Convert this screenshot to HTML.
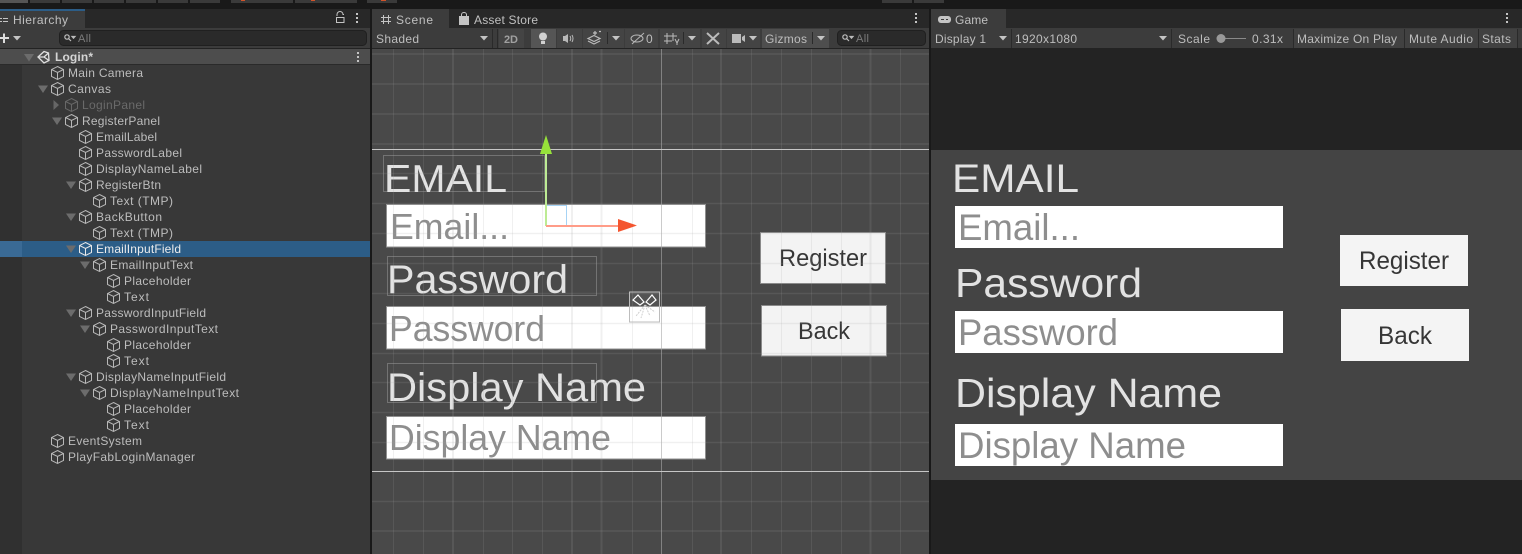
<!DOCTYPE html>
<html><head><meta charset="utf-8"><style>
html,body{margin:0;padding:0;background:#191919;width:1522px;height:554px;overflow:hidden}
svg{display:block}
text{font-family:"Liberation Sans",sans-serif}
.u{font-size:12px;fill:#bdbdbd}
.h{font-size:12px;fill:#c0c0c0}
.l{fill:#e2e2e2}
.p{fill:#8e8e8e}
.d{fill:#363636}
</style></head><body>
<svg width="1522" height="554" viewBox="0 0 1522 554" xmlns="http://www.w3.org/2000/svg">
<defs>
<g id="c" fill="none" stroke="#b8b8b8" stroke-width="1" transform="translate(.5 0)"><path d="M0 -6.500L6 -3.500V3.500L0 6.500L-6 3.500V-3.500Z"/><path d="M-6 -3.500L0 -.5L6 -3.500M0 -.5V6.500"/></g>
<g id="cd" fill="none" stroke="#686868" stroke-width="1" transform="translate(.5 0)"><path d="M0 -6.500L6 -3.500V3.500L0 6.500L-6 3.500V-3.500Z"/><path d="M-6 -3.500L0 -.5L6 -3.500M0 -.5V6.500"/></g>
<g id="cw" fill="none" stroke="#e8e8e8" stroke-width="1" transform="translate(.5 0)"><path d="M0 -6.500L6 -3.500V3.500L0 6.500L-6 3.500V-3.500Z"/><path d="M-6 -3.500L0 -.5L6 -3.500M0 -.5V6.500"/></g>
<path id="t" d="M-5 -3.500H5L0 4Z" fill="#6c6c6c"/>
<path id="dd" d="M-4 -2H4L0 2.500Z" fill="#c4c4c4"/>
<g id="dots" fill="#c4c4c4"><rect x="-1" y="-5" width="2" height="2"/><rect x="-1" y="-1" width="2" height="2"/><rect x="-1" y="3" width="2" height="2"/></g>
<g id="mag" fill="none" stroke="#bbb" stroke-width="1.200"><circle cx="0" cy="0" r="2.200"/><path d="M1.800 1.800L4 4M5 -.5H8L6.500 1.200Z"/></g>
</defs>

<!-- top toolbar remnants -->
<rect width="1522" height="554" fill="#191919"/>
<g fill="#3a3a3a">
<rect x="0" y="0" width="28" height="3" fill="#555"/><rect x="30" y="0" width="30" height="3"/><rect x="62" y="0" width="30" height="3"/><rect x="94" y="0" width="30" height="3"/><rect x="126" y="0" width="30" height="3"/><rect x="158" y="0" width="30" height="3"/><rect x="190" y="0" width="30" height="3"/>
<rect x="231" y="0" width="62" height="3"/><rect x="295" y="0" width="62" height="3"/><rect x="367" y="0" width="30" height="3"/><rect x="882" y="0" width="30" height="3"/><rect x="914" y="0" width="30" height="3"/>
</g>
<rect x="241" y="0" width="4" height="1" fill="#d0532a"/><rect x="311" y="0" width="4" height="1" fill="#d0532a"/><rect x="381" y="0" width="5" height="1" fill="#d0532a"/>

<!-- Hierarchy -->
<rect x="0" y="9" width="370" height="19" fill="#282828"/>
<rect x="0" y="9" width="85" height="19" fill="#3c3c3c"/>
<rect x="0" y="9" width="85" height="2" fill="#2c5d87"/>
<rect x="0" y="28" width="370" height="21" fill="#3c3c3c"/>
<rect x="0" y="48" width="370" height="1" fill="#232323"/>
<g fill="#c4c4c4"><rect x="0" y="18" width="2" height="1"/><rect x="3" y="18" width="5" height="1"/><rect x="0" y="21" width="2" height="1"/><rect x="3" y="21" width="5" height="1"/></g>
<text x="13" y="24" class="h" textLength="55">Hierarchy</text>
<path d="M337 16V14.500A3 3 0 0 1 343 14.500H344M336.500 17.500H344V22.500H336.500Z" fill="none" stroke="#c4c4c4"/>
<use href="#dots" x="357" y="18"/>
<path d="M0 38H9M4 33.500V43" stroke="#dcdcdc" stroke-width="2" fill="none"/>
<use href="#dd" x="17" y="38"/>
<rect x="59.500" y="30.500" width="307" height="15" rx="4" fill="#2a2a2a" stroke="#202020"/>
<use href="#mag" x="67" y="37"/>
<text x="78" y="42" font-size="11" fill="#7c7c7c" textLength="13">All</text>

<rect x="0" y="49" width="370" height="505" fill="#383838"/>
<rect x="0" y="65" width="22" height="489" fill="#303030"/>
<rect x="0" y="49" width="370" height="16" fill="#4d4d4d"/>
<rect x="0" y="64" width="370" height="1" fill="#2a2a2a"/>
<use href="#t" x="29" y="57.500" />
<g fill="none" stroke="#e0e0e0" stroke-width="1.300"><path d="M38 57L44 51.500L48.500 53L49 60.500L44 63Z"/><path d="M38 57H44L48.500 53M44 57L49 60.500"/></g>
<text x="55" y="61" font-size="12" font-weight="bold" fill="#d4d4d4" textLength="38">Login*</text>
<use href="#dots" x="358" y="57"/>

<rect x="0" y="241" width="370" height="16" fill="#2c5d87"/>
<rect x="0" y="241" width="22" height="16" fill="#3a6a95"/>

<use href="#c" x="57" y="73"/><text x="68" y="77" class="u" textLength="75">Main Camera</text>
<use href="#t" x="43" y="89"/><use href="#c" x="57" y="89"/><text x="68" y="93" class="u" textLength="43">Canvas</text>
<path d="M53.500 100L59 105L53.500 110Z" fill="#666"/><use href="#cd" x="71" y="105"/><text x="82" y="109" class="u" style="fill:#6a6a6a" textLength="63">LoginPanel</text>
<use href="#t" x="57" y="121"/><use href="#c" x="71" y="121"/><text x="82" y="125" class="u" textLength="78">RegisterPanel</text>
<use href="#c" x="85" y="137"/><text x="96" y="141" class="u" textLength="61">EmailLabel</text>
<use href="#c" x="85" y="153"/><text x="96" y="157" class="u" textLength="86">PasswordLabel</text>
<use href="#c" x="85" y="169"/><text x="96" y="173" class="u" textLength="106">DisplayNameLabel</text>
<use href="#t" x="71" y="185"/><use href="#c" x="85" y="185"/><text x="96" y="189" class="u" textLength="65">RegisterBtn</text>
<use href="#c" x="99" y="201"/><text x="110" y="205" class="u" textLength="63">Text (TMP)</text>
<use href="#t" x="71" y="217"/><use href="#c" x="85" y="217"/><text x="96" y="221" class="u" textLength="66">BackButton</text>
<use href="#c" x="99" y="233"/><text x="110" y="237" class="u" textLength="63">Text (TMP)</text>
<use href="#t" x="71" y="249"/><use href="#cw" x="85" y="249"/><text x="96" y="253" class="u" style="fill:#ececec" textLength="85">EmailInputField</text>
<use href="#t" x="85" y="265"/><use href="#c" x="99" y="265"/><text x="110" y="269" class="u" textLength="83">EmailInputText</text>
<use href="#c" x="113" y="281"/><text x="124" y="285" class="u" textLength="67">Placeholder</text>
<use href="#c" x="113" y="297"/><text x="124" y="301" class="u" textLength="25">Text</text>
<use href="#t" x="71" y="313"/><use href="#c" x="85" y="313"/><text x="96" y="317" class="u" textLength="110">PasswordInputField</text>
<use href="#t" x="85" y="329"/><use href="#c" x="99" y="329"/><text x="110" y="333" class="u" textLength="108">PasswordInputText</text>
<use href="#c" x="113" y="345"/><text x="124" y="349" class="u" textLength="67">Placeholder</text>
<use href="#c" x="113" y="361"/><text x="124" y="365" class="u" textLength="25">Text</text>
<use href="#t" x="71" y="377"/><use href="#c" x="85" y="377"/><text x="96" y="381" class="u" textLength="130">DisplayNameInputField</text>
<use href="#t" x="85" y="393"/><use href="#c" x="99" y="393"/><text x="110" y="397" class="u" textLength="129">DisplayNameInputText</text>
<use href="#c" x="113" y="409"/><text x="124" y="413" class="u" textLength="67">Placeholder</text>
<use href="#c" x="113" y="425"/><text x="124" y="429" class="u" textLength="25">Text</text>
<use href="#c" x="57" y="441"/><text x="68" y="445" class="u" textLength="74">EventSystem</text>
<use href="#c" x="57" y="457"/><text x="68" y="461" class="u" textLength="127">PlayFabLoginManager</text>

<!-- Scene tabs -->
<rect x="372" y="9" width="557" height="19" fill="#282828"/>
<rect x="372" y="9" width="77" height="19" fill="#3c3c3c"/>
<path d="M383.500 15V24M388.500 15V24M381 17.500H391M381 21.500H391" stroke="#c4c4c4" fill="none"/>
<text x="396" y="24" class="h" textLength="37">Scene</text>
<path d="M459 16H469V25H459Z" fill="#c4c4c4"/><path d="M461.500 16V14.500A2.500 2 0 0 1 466.500 14.500V16" fill="none" stroke="#c4c4c4"/>
<text x="474" y="24" class="h" textLength="64">Asset Store</text>
<use href="#dots" x="916" y="18"/>

<!-- Scene toolbar -->
<rect x="372" y="28" width="557" height="21" fill="#3c3c3c"/>
<rect x="372" y="48" width="557" height="1" fill="#232323"/>
<text x="376" y="43" class="u" textLength="43">Shaded</text>
<use href="#dd" x="484" y="38"/>
<rect x="492" y="29" width="1" height="19" fill="#2a2a2a"/><rect x="497" y="29" width="1" height="19" fill="#2a2a2a"/>
<rect x="499" y="29" width="25" height="19" fill="#444"/>
<text x="504" y="43" font-size="11" font-weight="bold" fill="#a0a0a0" textLength="14">2D</text>
<rect x="531" y="29" width="25" height="19" fill="#555"/>
<circle cx="543" cy="36.500" r="4" fill="#d0d0d0"/><rect x="541" y="41" width="4" height="3" fill="#d0d0d0"/>
<rect x="557" y="29" width="25" height="19" fill="#444"/>
<path d="M563 36H565L568 34V43L565 41H563Z" fill="#b8b8b8"/><path d="M570 36Q571.500 38.500 570 41M572 35Q574 38.500 572 42" stroke="#b8b8b8" fill="none"/>
<rect x="583" y="29" width="41" height="19" fill="#444"/>
<path d="M588 38.500L594 35.500L600 38.500L594 41.500ZM588 41L594 44L600 41M595 31V35M593 33H597M599 31.500H601" fill="none" stroke="#bbb" stroke-width="1.200"/>
<rect x="607" y="32" width="1" height="12" fill="#2a2a2a"/>
<use href="#dd" x="616" y="38"/>
<rect x="625" y="29" width="33" height="19" fill="#444"/>
<ellipse cx="637" cy="38.500" rx="6" ry="3.500" fill="none" stroke="#b8b8b8"/><path d="M632 44L644 33" stroke="#b8b8b8"/>
<text x="646" y="43" class="u" textLength="8">0</text>
<rect x="660" y="29" width="40" height="19" fill="#444"/>
<path d="M667 33V44M673 33V41M664 36H677M664 41H672M675 39L677 43V45M679 39L677 43" fill="none" stroke="#bbb"/>
<rect x="683" y="32" width="1" height="12" fill="#2a2a2a"/>
<use href="#dd" x="692" y="38"/>
<rect x="702" y="29" width="24" height="19" fill="#444"/>
<path d="M707 33L719 44M719 33L707 44" stroke="#bbb" stroke-width="2" fill="none"/>
<rect x="727" y="29" width="33" height="19" fill="#444"/>
<path d="M732 34H741V43H732ZM742 37L745 35V42L742 40Z" fill="#bbb"/>
<use href="#dd" x="753" y="38"/>
<rect x="762" y="29" width="67" height="19" fill="#4e4e4e"/>
<text x="765" y="43" class="u" textLength="42">Gizmos</text>
<rect x="812" y="32" width="1" height="12" fill="#2a2a2a"/>
<use href="#dd" x="821" y="38"/>
<rect x="837.500" y="30.500" width="88" height="15" rx="4" fill="#2a2a2a" stroke="#202020"/>
<use href="#mag" x="845" y="37"/>
<text x="856" y="42" font-size="11" fill="#7c7c7c" textLength="13">All</text>

<!-- Scene view -->
<rect x="372" y="49" width="557" height="505" fill="#494949"/>

<!-- scene UI -->
<rect x="383.500" y="155.500" width="161" height="36" fill="none" stroke="#737373"/>
<rect x="387.500" y="256.500" width="209" height="39" fill="none" stroke="#737373"/>
<rect x="387.500" y="363.500" width="209" height="39" fill="none" stroke="#737373"/>
<text x="384" y="192" font-size="39" class="l" textLength="123" lengthAdjust="spacingAndGlyphs">EMAIL</text>
<text x="387" y="293" font-size="40" class="l" textLength="181" lengthAdjust="spacingAndGlyphs">Password</text>
<text x="387" y="401" font-size="40" class="l" textLength="259" lengthAdjust="spacingAndGlyphs">Display Name</text>
<g fill="#fff" stroke="#8f8f8f">
<rect x="386.500" y="204.500" width="319" height="42.500"/>
<rect x="386.500" y="306.500" width="319" height="42.500"/>
<rect x="386.500" y="416.500" width="319" height="42.500"/>
</g>
<g fill="#f3f3f3" stroke="#8a8a8a">
<rect x="760.500" y="232.500" width="125" height="51"/>
<rect x="761.500" y="305.500" width="125" height="50.500"/>
</g>
<text x="390" y="239" font-size="36" class="p" textLength="119" lengthAdjust="spacingAndGlyphs">Email...</text>
<text x="389" y="341" font-size="36" class="p" textLength="156" lengthAdjust="spacingAndGlyphs">Password</text>
<text x="389" y="450" font-size="36" class="p" textLength="222" lengthAdjust="spacingAndGlyphs">Display Name</text>
<text x="779" y="266" font-size="24" class="d" textLength="88" lengthAdjust="spacingAndGlyphs">Register</text>
<text x="798" y="339" font-size="24" class="d" textLength="52" lengthAdjust="spacingAndGlyphs">Back</text>

<!-- grid -->
<g stroke="#a0a0a0" stroke-opacity=".16" stroke-width="1" fill="none">
<path d="M393.500 49V554M423.500 49V554M483.500 49V554M512.500 49V554M542.500 49V554M632.500 49V554M692.500 49V554M751.500 49V554M781.500 49V554M811.500 49V554M841.500 49V554M900.500 49V554"/>
<path d="M453 49V554M572 49V554M601.500 49V554M721 49V554M870.500 49V554" stroke-width="2"/>
<path d="M372 54H929M372 84H929M372 114H929M372 144H929M372 173.500H929M372 203.500H929M372 233.500H929M372 263.500H929M372 293.500H929M372 323.500H929M372 353.500H929M372 382.500H929M372 412.500H929M372 442.500H929M372 501.500H929M372 531H929" stroke-width="1.500"/>
</g>
<path d="M661.500 49V554" stroke="#a8a8a8" stroke-opacity=".6"/>
<path d="M372 149.500H929M372 471.500H929" stroke="#c6c6c6"/>

<!-- gizmo -->
<rect x="546.500" y="205.500" width="20" height="20" fill="none" stroke="#a6d3f5"/>
<rect x="545" y="150" width="2" height="76" fill="#bdeb94"/>
<path d="M546 135L552 154H540Z" fill="#97e23a"/>
<rect x="546" y="225" width="74" height="2" fill="#ff9c88"/>
<path d="M618 219L637 225.500L618 232Z" fill="#f4552f"/>
<!-- canvas icon -->
<rect x="629.500" y="292" width="30" height="30" fill="#fff" fill-opacity=".06" stroke="#bdbdbd"/>
<path d="M638 295L644 302L640 305L633 300ZM652 295L646 302L650 305L656 300Z" fill="none" stroke="#fff" stroke-width="1.200"/>
<path d="M645 305L636 316M645 305L641 318M645 305L650 316M645 305L655 312" stroke="#cfcfcf" stroke-dasharray="2 1" fill="none"/>

<!-- Game -->
<rect x="931" y="9" width="591" height="19" fill="#282828"/>
<rect x="931" y="9" width="75" height="19" fill="#3c3c3c"/>
<rect x="938" y="16" width="13" height="7" rx="3" fill="#c4c4c4"/><rect x="941" y="19" width="3" height="1" fill="#3c3c3c"/><rect x="946" y="19" width="2" height="1" fill="#3c3c3c"/>
<text x="955" y="24" class="h" textLength="33">Game</text>
<use href="#dots" x="1507" y="18"/>
<rect x="931" y="28" width="591" height="21" fill="#3c3c3c"/>
<rect x="931" y="48" width="591" height="1" fill="#232323"/>
<text x="935" y="43" class="u" textLength="51">Display 1</text>
<use href="#dd" x="1003" y="38"/>
<rect x="1011" y="29" width="1" height="19" fill="#2a2a2a"/>
<text x="1015" y="43" class="u" textLength="62">1920x1080</text>
<use href="#dd" x="1163" y="38"/>
<rect x="1171" y="29" width="1" height="19" fill="#2a2a2a"/>
<text x="1178" y="43" class="u" textLength="32">Scale</text>
<rect x="1222" y="38" width="24" height="1" fill="#8a8a8a"/>
<circle cx="1221" cy="38.500" r="4.500" fill="#999"/>
<text x="1252" y="43" class="u" textLength="31">0.31x</text>
<rect x="1293" y="29" width="1" height="19" fill="#2a2a2a"/>
<rect x="1294" y="29" width="110" height="19" fill="#414141"/>
<text x="1297" y="43" class="u" textLength="100">Maximize On Play</text>
<rect x="1404" y="29" width="1" height="19" fill="#2a2a2a"/>
<rect x="1405" y="29" width="73" height="19" fill="#414141"/>
<text x="1409" y="43" class="u" textLength="64">Mute Audio</text>
<rect x="1478" y="29" width="1" height="19" fill="#2a2a2a"/>
<rect x="1479" y="29" width="38" height="19" fill="#414141"/>
<text x="1482" y="43" class="u" textLength="29">Stats</text>
<rect x="1517" y="29" width="1" height="19" fill="#2a2a2a"/>

<rect x="931" y="49" width="591" height="505" fill="#232323"/>
<rect x="931" y="150" width="591" height="330" fill="#444444"/>
<text x="952" y="192" font-size="40" class="l" textLength="127" lengthAdjust="spacingAndGlyphs">EMAIL</text>
<text x="955" y="297" font-size="41" class="l" textLength="187" lengthAdjust="spacingAndGlyphs">Password</text>
<text x="955" y="407" font-size="41" class="l" textLength="267" lengthAdjust="spacingAndGlyphs">Display Name</text>
<g fill="#fff">
<rect x="955" y="206" width="328" height="42"/>
<rect x="955" y="311" width="328" height="42"/>
<rect x="955" y="424" width="328" height="42"/>
</g>
<text x="958" y="240" font-size="37" class="p" textLength="122" lengthAdjust="spacingAndGlyphs">Email...</text>
<text x="958" y="345" font-size="37" class="p" textLength="160" lengthAdjust="spacingAndGlyphs">Password</text>
<text x="958" y="458" font-size="37" class="p" textLength="228" lengthAdjust="spacingAndGlyphs">Display Name</text>
<rect x="1340" y="235" width="128" height="51" fill="#f4f4f4"/>
<rect x="1341" y="309" width="128" height="52" fill="#f4f4f4"/>
<text x="1359" y="269" font-size="25" class="d" textLength="90" lengthAdjust="spacingAndGlyphs">Register</text>
<text x="1378" y="344" font-size="25" class="d" textLength="54" lengthAdjust="spacingAndGlyphs">Back</text>
</svg>
</body></html>
